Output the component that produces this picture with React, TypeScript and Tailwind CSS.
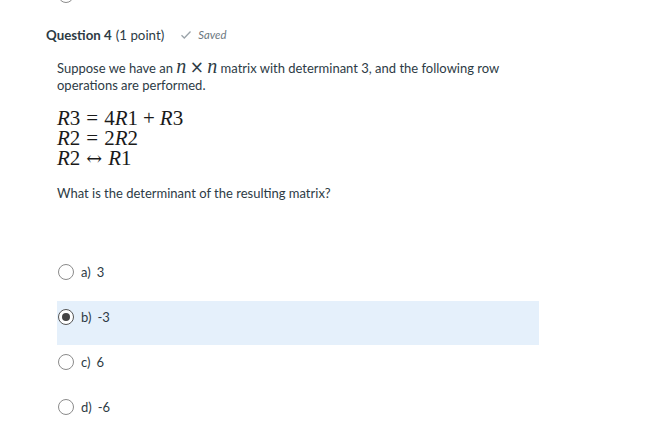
import React from "react";

const Radio = ({ checked }: { checked?: boolean }) => (
  <span
    className={`flex h-[16px] w-[16px] shrink-0 items-center justify-center rounded-full border bg-white ${
      checked ? "border-[#555]" : "border-[#8b8b8b]"
    }`}
  >
    {checked ? <span className="h-[8px] w-[8px] rounded-full bg-[#444]" /> : null}
  </span>
);

const options = [
  { k: "a)", v: "3", sel: false },
  { k: "b)", v: "-3", sel: true },
  { k: "c)", v: "6", sel: false },
  { k: "d)", v: "-6", sel: false },
];

const M = ({ children }: { children: React.ReactNode }) => (
  <span className="italic">{children}</span>
);

const Rel = ({ children }: { children: React.ReactNode }) => (
  <span className="mx-[6px]">{children}</span>
);
const Bin = ({ children }: { children: React.ReactNode }) => (
  <span className="mx-[5px]">{children}</span>
);

export default function App() {
  return (
    <div
      className="h-[444px] w-[648px] overflow-hidden bg-white text-[#2d3b45]"
      style={{ fontFamily: "Lato, 'Noto Sans', sans-serif" }}
    >
      <div className="ml-[58px] h-[3px] overflow-hidden">
        <div className="mt-[-13px]">
          <Radio />
        </div>
      </div>

      <div className="ml-[46px] mt-[23px] flex items-center text-[13.3px] leading-[18px]">
        <span className="font-bold">Question 4</span>
        <span className="ml-[4px]">(1 point)</span>
        <svg className="ml-[16px]" width="12" height="10" viewBox="0 0 12 10">
          <path d="M1.5 5.2 L4.3 8 L10.5 1.5" fill="none" stroke="#9aa3a9" strokeWidth="1.3" />
        </svg>
        <span className="ml-[6px] text-[11.3px] italic text-[#6b7780]">Saved</span>
      </div>

      <div className="ml-[57px] mt-[16px] w-[470px] text-[13px] leading-[17px]">
        <p>
          Suppose we have an{" "}
          <span
            className="text-[20px] italic leading-[10px]"
            style={{ fontFamily: "'Liberation Serif', serif" }}
          >
            n
          </span>{" "}
          <span className="text-[17px] leading-[10px]" style={{ fontFamily: "'DejaVu Sans', sans-serif" }}>
            ×
          </span>{" "}
          <span
            className="text-[20px] italic leading-[10px]"
            style={{ fontFamily: "'Liberation Serif', serif" }}
          >
            n
          </span>{" "}
          matrix with determinant 3, and the following row operations are performed.
        </p>
      </div>

      <div
        className="ml-[57px] mt-[14px] flex flex-col text-[21px] leading-[20px] text-[#1a1a1a]"
        style={{ fontFamily: "'Liberation Serif', serif" }}
      >
        <div>
          <M>R</M>3<Rel>=</Rel>4<M>R</M>1<Bin>+</Bin>
          <M>R</M>3
        </div>
        <div>
          <M>R</M>2<Rel>=</Rel>2<M>R</M>2
        </div>
        <div>
          <M>R</M>2
          <Rel>
            <span className="text-[19px]" style={{ fontFamily: "'DejaVu Serif', serif" }}>
              ↔
            </span>
          </Rel>
          <M>R</M>1
        </div>
      </div>

      <p className="ml-[57px] mt-[17px] text-[13px] leading-[17px]">
        What is the determinant of the resulting matrix?
      </p>

      <div className="ml-[57px] mt-[54px] flex w-[482px] flex-col gap-[1px]">
        {options.map((o) => (
          <div
            key={o.k}
            className={`flex h-[44px] items-start pl-[1px] pt-[8px] ${o.sel ? "bg-[#e5f0fb]" : ""}`}
          >
            <Radio checked={o.sel} />
            <span className="ml-[7px] text-[13px] leading-[16px]">{o.k}</span>
            <span className="ml-[6px] text-[13px] leading-[16px]">{o.v}</span>
          </div>
        ))}
      </div>
    </div>
  );
}
